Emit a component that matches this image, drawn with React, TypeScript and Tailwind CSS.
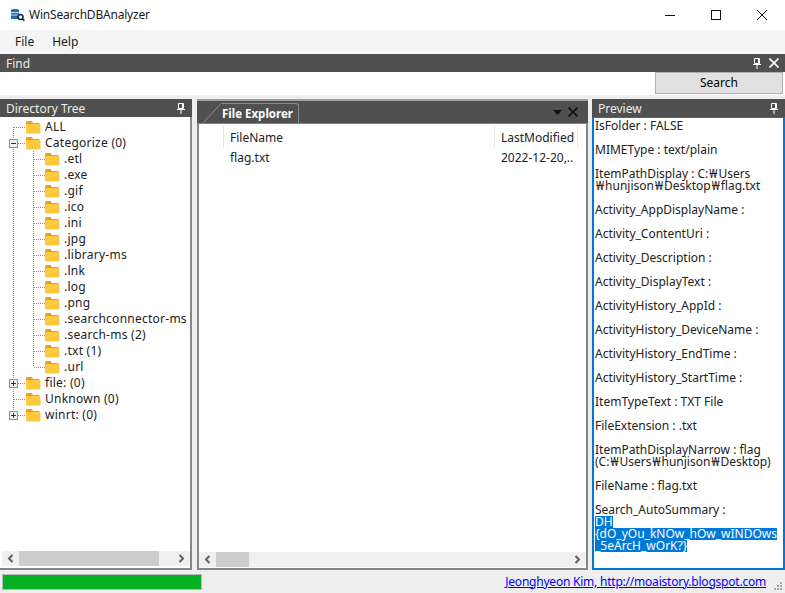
import React from 'react';

const FONT = '"Noto Sans", "Noto Sans CJK KR", sans-serif';

function Pin({ className = '' }: { className?: string }) {
  return (
    <svg width="8" height="11" viewBox="0 0 8 11" className={className} fill="none" stroke="currentColor">
      <path d="M1.5 .5h5v5h-5zM5.5 1v4.5M0 6.5h8M4 7v4" />
    </svg>
  );
}

function CloseX({ size = 10, className = '' }: { size?: number; className?: string }) {
  return (
    <svg width={size} height={size} viewBox="0 0 10 10" className={className} stroke="currentColor" strokeWidth="1.6">
      <path d="M.5 .5l9 9M9.5 .5l-9 9" />
    </svg>
  );
}

function PanelHeader({ title, close }: { title: string; close?: boolean }) {
  return (
    <div className="h-[18px] shrink-0 bg-[#505050] flex items-center pl-[6px] pr-[6px] text-[#ececec] text-[12px]">
      <span className="flex-1 leading-[18px] pt-[2px]">{title}</span>
      <Pin className="text-white mr-[1px]" />
      {close && <CloseX className="text-white ml-[7px]" />}
    </div>
  );
}

function Chevron({ dir }: { dir: 'left' | 'right' }) {
  return (
    <svg width="7" height="9" viewBox="0 0 7 9" fill="none" stroke="#606060" strokeWidth="2">
      <path d={dir === 'left' ? 'M5.5 1L2 4.5L5.5 8' : 'M1.5 1L5 4.5L1.5 8'} />
    </svg>
  );
}

function HScroll({ thumbLeft, thumbWidth }: { thumbLeft: number; thumbWidth: number }) {
  return (
    <div className="h-[15px] shrink-0 bg-[#f0f0f0] flex items-center">
      <div className="w-[17px] flex justify-center shrink-0">
        <Chevron dir="left" />
      </div>
      <div className="flex-1 h-full">
        <div className="h-full bg-[#cdcdcd]" style={{ marginLeft: thumbLeft, width: thumbWidth }} />
      </div>
      <div className="w-[17px] flex justify-center shrink-0">
        <Chevron dir="right" />
      </div>
    </div>
  );
}

type Node = {
  label: string;
  level: 0 | 1;
  expander?: 'plus' | 'minus';
  last?: boolean;
};

const TREE: Node[] = [
  { label: 'ALL', level: 0 },
  { label: 'Categorize (0)', level: 0, expander: 'minus' },
  { label: '.etl', level: 1 },
  { label: '.exe', level: 1 },
  { label: '.gif', level: 1 },
  { label: '.ico', level: 1 },
  { label: '.ini', level: 1 },
  { label: '.jpg', level: 1 },
  { label: '.library-ms', level: 1 },
  { label: '.lnk', level: 1 },
  { label: '.log', level: 1 },
  { label: '.png', level: 1 },
  { label: '.searchconnector-ms', level: 1 },
  { label: '.search-ms (2)', level: 1 },
  { label: '.txt (1)', level: 1 },
  { label: '.url', level: 1, last: true },
  { label: 'file: (0)', level: 0, expander: 'plus' },
  { label: 'Unknown (0)', level: 0 },
  { label: 'winrt: (0)', level: 0, expander: 'plus', last: true },
];

function TreeGlyphs({ node, first }: { node: Node; first: boolean }) {
  const width = node.level === 0 ? 44 : 63;
  const fx = node.level === 0 ? 26 : 45;
  const dash = { stroke: '#8a8a8a', strokeDasharray: '1 1' };
  return (
    <svg width={width} height="16" viewBox={`0 0 ${width} 16`} className="shrink-0">
      <path d={`M13.5 ${first ? 8 : 0}V${node.level === 0 && node.last ? 8 : 16}`} {...dash} fill="none" />
      {node.level === 1 && (
        <>
          <path d={`M33.5 0V${node.last ? 8 : 16}`} {...dash} fill="none" />
          <path d="M34 8.5H45" {...dash} fill="none" />
        </>
      )}
      {node.level === 0 && <path d="M14 8.5H26" {...dash} fill="none" />}
      {node.expander && (
        <>
          <rect x="9.5" y="4.5" width="8" height="8" fill="#f1f1f4" stroke="#8f8f9c" />
          <path d="M11 8.5H16" stroke="#1c2f6b" fill="none" />
          {node.expander === 'plus' && <path d="M13.5 6V11" stroke="#1c2f6b" fill="none" />}
        </>
      )}
      <g transform={`translate(${fx} 1)`}>
        <path d="M0 2.5C0 1.5 .5 1 1.5 1H5.5L7 3H13.5V6H0Z" fill="#fb9a10" />
        <path d="M0 5.5C0 4.5 .7 4 1.5 4H13C14 4 14.5 4.6 14.5 5.5V12C14.5 13 14 13.5 13 13.5H1.5C.5 13.5 0 13 0 12Z" fill="#fdc93e" />
      </g>
    </svg>
  );
}

const PREVIEW = [
  ['IsFolder : FALSE'],
  ['MIMEType : text/plain'],
  ['ItemPathDisplay : C:₩Users', '₩hunjison₩Desktop₩flag.txt'],
  ['Activity_AppDisplayName :'],
  ['Activity_ContentUri :'],
  ['Activity_Description :'],
  ['Activity_DisplayText :'],
  ['ActivityHistory_AppId :'],
  ['ActivityHistory_DeviceName :'],
  ['ActivityHistory_EndTime :'],
  ['ActivityHistory_StartTime :'],
  ['ItemTypeText : TXT File'],
  ['FileExtension : .txt'],
  ['ItemPathDisplayNarrow : flag', '(C:₩Users₩hunjison₩Desktop)'],
  ['FileName : flag.txt'],
  ['Search_AutoSummary :'],
];

const SELECTED = ['DH', '{dO_yOu_kNOw_hOw_wINDOws', '_5eArcH_wOrK?}'];

// the won sign is wider in the original font
function PathText({ text }: { text: string }) {
  const parts = text.split('₩');
  return (
    <>
      {parts.map((p, i) => (
        <React.Fragment key={i}>
          {i > 0 && <span className="mx-[1px]">₩</span>}
          {p}
        </React.Fragment>
      ))}
    </>
  );
}

export default function App() {
  return (
    <div
      className="w-[785px] h-[593px] flex flex-col bg-[#eeeeee] overflow-hidden text-[12px] text-black"
      style={{ fontFamily: FONT }}
    >
      {/* Title bar */}
      <div className="h-[30px] bg-white flex items-center shrink-0">
        <svg width="16" height="16" viewBox="0 0 16 16" className="ml-[10px] shrink-0">
          <path d="M1 3c0-1.5 8-1.5 8 0v9H1z" fill="#1f6fb5" />
          <path d="M1 5.5h8M1 8h8" stroke="#bfe0f5" fill="none" />
          <circle cx="10.5" cy="10" r="2.5" fill="none" stroke="#1c2530" strokeWidth="1.5" />
          <path d="M12 12l2.5 1.5" stroke="#1c2530" strokeWidth="1.5" />
        </svg>
        <span className="ml-[3px] text-[12px] tracking-[-0.2px] text-[#1a1a1a]">WinSearchDBAnalyzer</span>
        <div className="ml-auto flex items-center h-full">
          <div className="w-[46px] flex justify-center">
            <svg width="10" height="10" viewBox="0 0 10 10" stroke="#111">
              <path d="M0 5.5h10" />
            </svg>
          </div>
          <div className="w-[46px] flex justify-center">
            <svg width="10" height="10" viewBox="0 0 10 10" fill="none" stroke="#111">
              <rect x=".5" y=".5" width="9" height="9" />
            </svg>
          </div>
          <div className="w-[46px] flex justify-center">
            <svg width="10" height="10" viewBox="0 0 10 10" fill="none" stroke="#111">
              <path d="M0 0l10 10M10 0L0 10" />
            </svg>
          </div>
        </div>
      </div>

      {/* Menu */}
      <div className="h-[24px] bg-[#f5f5f5] flex items-center shrink-0 pl-[15px] gap-[18px] text-[#1a1a1a]">
        <span>File</span>
        <span>Help</span>
      </div>

      {/* Find */}
      <PanelHeader title="Find" close />
      <div className="h-[23px] bg-white flex justify-end items-start shrink-0 pr-[2px]">
        <div className="w-[128px] h-[22px] bg-[#e1e1e1] border border-[#adadad] flex items-center justify-center leading-[18px]">
          Search
        </div>
      </div>

      {/* Docked panels */}
      <div className="flex-1 min-h-0 flex pt-[4px] bg-[#eeeeee]">
        {/* Directory Tree */}
        <div className="w-[192px] flex flex-col shrink-0">
          <PanelHeader title="Directory Tree" />
          <div className="flex-1 min-h-0 flex flex-col bg-white border-r-2 border-b-2 border-[#868686]">
            <div className="flex-1 min-h-0 pt-[2px] overflow-hidden">
              {TREE.map((n, i) => (
                <div key={n.label} className="h-[16px] flex items-center whitespace-nowrap">
                  <TreeGlyphs node={n} first={i === 0} />
                  <span className="ml-[1px] text-[#222] tracking-[0.25px]">{n.label}</span>
                </div>
              ))}
            </div>
            <div className="pl-[2px] pb-[2px]">
              <HScroll thumbLeft={0} thumbWidth={140} />
            </div>
          </div>
        </div>

        {/* File Explorer */}
        <div className="w-[391px] ml-[5px] flex flex-col shrink-0">
          <div className="h-[24px] bg-[#505050] shrink-0 flex items-end pl-[6px] pr-[10px] border-t-2 border-[#a0a0a0]">
            <svg width="18" height="20" viewBox="0 0 18 20" className="shrink-0" fill="none" stroke="#8c8c8c">
              <path d="M0 20L18 .5" />
            </svg>
            <div className="h-[20px] w-[78px] border-t border-r border-[#8c8c8c] rounded-tr-[3px] pl-[1px] text-white font-bold text-[11.5px] leading-[19px] whitespace-nowrap">
              File Explorer
            </div>
            <div className="ml-auto flex items-center gap-[6px] pb-[6px] text-[#111]">
              <svg width="9" height="5" viewBox="0 0 9 5" fill="currentColor">
                <path d="M0 0h9L4.5 5z" />
              </svg>
              <CloseX />
            </div>
          </div>
          <div className="flex-1 min-h-0 flex flex-col bg-white border-2 border-t border-[#868686]">
            <div className="flex-1 min-h-0 pl-[24px] pr-[8px]">
              <div className="flex h-[24px] pt-[2px] text-[#222]">
                <div className="flex-1 border-l border-[#e5e5e5] pl-[6px] leading-[24px]">FileName</div>
                <div className="w-[84px] border-x border-[#e5e5e5] pl-[6px] leading-[24px] whitespace-nowrap">LastModified</div>
              </div>
              <div className="flex h-[16px] text-[#222] leading-[16px] mt-[2px]">
                <div className="flex-1 pl-[7px]">flag.txt</div>
                <div className="w-[84px] pl-[7px] whitespace-nowrap">2022-12-20,..</div>
              </div>
            </div>
            <div className="pb-[1px]">
              <HScroll thumbLeft={0} thumbWidth={33} />
            </div>
          </div>
        </div>

        {/* Preview */}
        <div className="flex-1 ml-[4px] flex flex-col min-w-0">
          <PanelHeader title="Preview" />
          <div className="flex-1 min-h-0 bg-white border-2 border-t border-[#0078d7] pl-[1px] pt-[2px] overflow-hidden text-[#222] leading-[12px]">
            {PREVIEW.map((p) => (
              <div key={p[0]} className="mb-[12px]">
                {p.map((l) => (
                  <div key={l} className="whitespace-nowrap h-[12px]">
                    <PathText text={l} />
                  </div>
                ))}
              </div>
            ))}
            <div className="-mt-[12px]">
              {SELECTED.map((l) => (
                <div key={l} className="h-[12px] whitespace-nowrap">
                  <span className="bg-[#0078d7] inline-block h-[12px]">
                    <span className="relative z-10 text-white">{l}</span>
                  </span>
                </div>
              ))}
            </div>
          </div>
        </div>
      </div>

      {/* Status bar */}
      <div className="h-[23px] shrink-0 flex items-center bg-[#eeeeee] pl-[2px] relative">
        <div className="w-[200px] h-[16px] bg-[#06b025] border border-[#bcbcbc]" />
        <a className="ml-auto mr-[19px] text-[#0000ff] underline leading-[16px] tracking-[-0.22px]">Jeonghyeon Kim, http://moaistory.blogspot.com</a>
        <svg width="10" height="10" viewBox="0 0 10 10" className="absolute right-[2px] bottom-[2px]" fill="#a8a8a8">
          <path d="M7 1h2v2H7zM4 4h2v2H4zM7 4h2v2H7zM1 7h2v2H1zM4 7h2v2H4zM7 7h2v2H7z" />
        </svg>
      </div>
    </div>
  );
}
